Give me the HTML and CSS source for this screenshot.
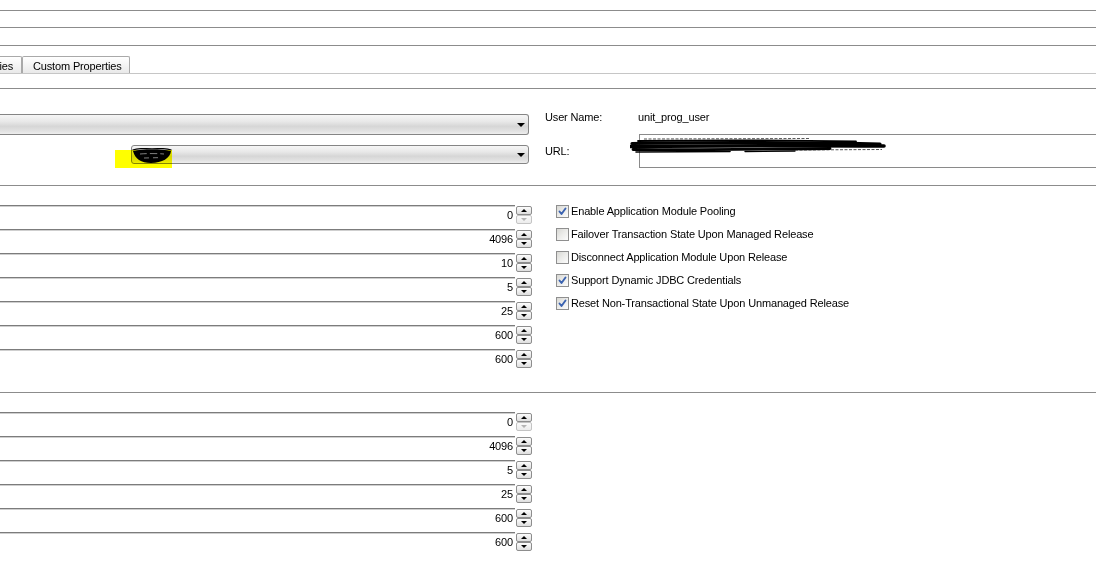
FILE: index.html
```html
<!DOCTYPE html>
<html>
<head>
<meta charset="utf-8">
<title>Configuration</title>
<link rel="stylesheet" href="styles.css">
</head>
<body>
<div class="page">
  <div class="band b1"></div>
  <div class="band b2"></div>
  <div class="band b3"></div>

  <div class="tabsec">
    <div class="tabbar">
      <div class="tab first">ies</div>
      <div class="tab">Custom Properties</div>
    </div>
  </div>

  <section class="conn">
    <div class="conn-left">
      <div class="combo c1"><span class="arrow"></span></div>
      <div class="combo c2">
        <span class="arrow"></span>
        <span class="hilite"></span>
        <svg class="blot" viewBox="0 0 40 16" width="40" height="16">
          <path d="M1 3 C10 0.5 30 0.5 39 3 C38.5 10 30 15 19 15 C9 15 3 11 1 3Z" fill="#000"/>
          <path d="M0.5 2 C10 -0.5 30 -0.5 39.5 2" stroke="#000" stroke-width="1.2" fill="none"/>
          <path d="M8 6 C15 5.4 25 5.4 32 6" stroke="#fff" stroke-width="0.5" fill="none" stroke-dasharray="7 3"/>
          <path d="M12 10 L 29 9.6" stroke="#fff" stroke-width="0.5" stroke-dasharray="5 4" fill="none"/>
        </svg>
      </div>
    </div>
    <div class="conn-right">
      <div class="kv"><span class="lbl">User Name:</span><span class="val">unit_prog_user</span></div>
      <div class="kv url">
        <span class="lbl">URL:</span>
        <div class="urlbox">
          <svg class="urlscrib" viewBox="0 0 256 18" width="256" height="18">
            <g stroke="#555" stroke-width="1" stroke-dasharray="3 1.5" fill="none">
              <path d="M14 2 L 180 1.5"/>
              <path d="M165 13 L 252 12.5"/>
            </g>
            <g fill="none" stroke="#000" stroke-linecap="round">
              <path d="M8 4 C80 3 150 3 226 4.5" stroke-width="1.8"/>
              <path d="M2 6.5 C60 5.5 140 5 250 7" stroke-width="3.2"/>
              <path d="M0 9.5 C70 9 150 8 254 9" stroke-width="3.6"/>
              <path d="M3 12.5 C50 13 110 12.5 200 11.5" stroke-width="2.8"/>
              <path d="M6 15 L 100 14.5" stroke-width="1.6"/>
              <path d="M115 14.5 L 165 14" stroke-width="1.3"/>
            </g>
          </svg>
        </div>
      </div>
    </div>
  </section>

  <section class="pool">
    <div class="spins">
      <div class="spin"><div class="field">0</div><div class="spinner"><span class="btn up"></span><span class="btn down off"></span></div></div>
      <div class="spin"><div class="field">4096</div><div class="spinner"><span class="btn up"></span><span class="btn down"></span></div></div>
      <div class="spin"><div class="field">10</div><div class="spinner"><span class="btn up"></span><span class="btn down"></span></div></div>
      <div class="spin"><div class="field">5</div><div class="spinner"><span class="btn up"></span><span class="btn down"></span></div></div>
      <div class="spin"><div class="field">25</div><div class="spinner"><span class="btn up"></span><span class="btn down"></span></div></div>
      <div class="spin"><div class="field">600</div><div class="spinner"><span class="btn up"></span><span class="btn down"></span></div></div>
      <div class="spin"><div class="field">600</div><div class="spinner"><span class="btn up"></span><span class="btn down"></span></div></div>
    </div>
    <div class="checks">
      <label class="chk-row"><span class="box on"><svg viewBox="0 0 11 11" width="11" height="11"><polyline points="2.5,5.5 4.5,8 8.5,2.5" /></svg></span><span class="txt">Enable Application Module Pooling</span></label>
      <label class="chk-row"><span class="box"></span><span class="txt">Failover Transaction State Upon Managed Release</span></label>
      <label class="chk-row"><span class="box"></span><span class="txt">Disconnect Application Module Upon Release</span></label>
      <label class="chk-row"><span class="box on"><svg viewBox="0 0 11 11" width="11" height="11"><polyline points="2.5,5.5 4.5,8 8.5,2.5" /></svg></span><span class="txt">Support Dynamic JDBC Credentials</span></label>
      <label class="chk-row"><span class="box on"><svg viewBox="0 0 11 11" width="11" height="11"><polyline points="2.5,5.5 4.5,8 8.5,2.5" /></svg></span><span class="txt">Reset Non-Transactional State Upon Unmanaged Release</span></label>
    </div>
  </section>

  <section class="pool2">
    <div class="spins">
      <div class="spin"><div class="field">0</div><div class="spinner"><span class="btn up"></span><span class="btn down off"></span></div></div>
      <div class="spin"><div class="field">4096</div><div class="spinner"><span class="btn up"></span><span class="btn down"></span></div></div>
      <div class="spin"><div class="field">5</div><div class="spinner"><span class="btn up"></span><span class="btn down"></span></div></div>
      <div class="spin"><div class="field">25</div><div class="spinner"><span class="btn up"></span><span class="btn down"></span></div></div>
      <div class="spin"><div class="field">600</div><div class="spinner"><span class="btn up"></span><span class="btn down"></span></div></div>
      <div class="spin"><div class="field">600</div><div class="spinner"><span class="btn up"></span><span class="btn down"></span></div></div>
    </div>
  </section>
</div>
</body>
</html>
```

FILE: styles.css
```css
html, body {
  margin: 0;
  padding: 0;
  background: #ffffff;
}
body {
  font-family: "Liberation Sans", Arial, sans-serif;
  font-size: 11px;
  letter-spacing: -0.15px;
  color: #000;
  overflow: hidden;
  width: 1096px;
  height: 575px;
}
.page {
  width: 1096px;
}

/* top rules */
.band {
  border-bottom: 1px solid #8c8c8c;
}
.b1 { height: 10px; }
.b2 { height: 16px; }
.b3 { height: 17px; }

/* tabs */
.tabsec {
  padding-top: 10px;
  padding-bottom: 14px;
  border-bottom: 1px solid #8c8c8c;
}
.tabbar {
  display: flex;
  height: 17px;
  border-bottom: 1px solid #c6c6c6;
}
.tab {
  box-sizing: border-box;
  height: 17px;
  line-height: 16px;
  padding: 1px 9px 0 10px;
  border: 1px solid #a9a9a9;
  border-bottom: none;
  border-radius: 2px 2px 0 0;
  background: linear-gradient(#ffffff, #e9e9e9);
  color: #000;
  white-space: nowrap;
}
.tab.first {
  width: 22px;
  border-left: none;
  border-radius: 0 2px 0 0;
  overflow: hidden;
  direction: rtl;
  text-align: right;
  padding: 1px 8px 0 0;
}
.tab + .tab {
  width: 108px;
}

/* connection section */
.conn {
  display: flex;
  height: 96px;
  border-bottom: 1px solid #8c8c8c;
}
.conn-left {
  width: 530px;
  padding-top: 25px;
}
.combo {
  position: relative;
  box-sizing: border-box;
  display: flex;
  align-items: center;
  justify-content: flex-end;
  padding-right: 2px;
  border: 1px solid #858585;
  border-radius: 3px;
  background: linear-gradient(#f6f6f6 0%, #e8e8e8 35%, #d6d6d6 60%, #e2e2e2 85%, #eeeeee 100%);
}
.c1 {
  width: 529px;
  height: 21px;
  border-left: none;
  border-radius: 0 3px 3px 0;
}
.c2 {
  width: 398px;
  height: 19px;
  margin-top: 10px;
  margin-left: 131px;
}
.arrow {
  width: 0;
  height: 0;
  border-left: 4px solid transparent;
  border-right: 4px solid transparent;
  border-top: 4px solid #000;
  margin-right: 1px;
}
.hilite {
  position: absolute;
  left: -17px;
  top: 4px;
  width: 57px;
  height: 18px;
  background: #ffff00;
  mix-blend-mode: multiply;
}
.blot {
  position: absolute;
  left: 0;
  top: 2px;
}

.conn-right {
  flex: 1;
  margin-left: 15px;
  padding-top: 20px;
}
.kv {
  display: flex;
  align-items: center;
}
.kv .lbl {
  width: 93px;
  line-height: 16px;
}
.kv:first-child {
  height: 16px;
}
.kv.url {
  margin-top: 9px;
}
.urlbox {
  position: relative;
  flex: 1;
  height: 34px;
  box-sizing: border-box;
  margin-left: 1px;
  border: 1px solid #8a8a8a;
  border-right: none;
}
.urlscrib {
  position: absolute;
  left: -10px;
  top: 2px;
}

/* spinner groups */
.pool {
  display: flex;
  height: 206px;
  border-bottom: 1px solid #8c8c8c;
}
.pool2 {
  display: flex;
}
.spins {
  width: 533px;
  padding-top: 19px;
  display: flex;
  flex-direction: column;
  gap: 4px;
}
.spin {
  display: flex;
  height: 20px;
}
.field {
  box-sizing: border-box;
  width: 515px;
  height: 20px;
  border-top: 1px solid #7c7c7c;
  box-shadow: inset 0 1px 0 #cfcfcf;
  text-align: right;
  padding-right: 2px;
  line-height: 19px;
}
.spinner {
  margin-left: 1px;
  margin-top: 1px;
  width: 16px;
  display: flex;
  flex-direction: column;
}
.btn {
  box-sizing: border-box;
  height: 9px;
  border: 1px solid #8d8d8d;
  border-radius: 2px;
  background: linear-gradient(#fdfdfd, #dedede);
  display: flex;
  align-items: center;
  justify-content: center;
}
.btn::after {
  content: "";
  width: 0;
  height: 0;
  border-left: 3px solid transparent;
  border-right: 3px solid transparent;
}
.btn.up::after {
  border-bottom: 3px solid #000;
}
.btn.down::after {
  border-top: 3px solid #000;
}
.btn.off {
  border-color: #c4c4c4;
  background: linear-gradient(#fafafa, #ececec);
}
.btn.down.off::after {
  border-top-color: #b4b4b4;
}

/* checkboxes */
.checks {
  margin-left: 23px;
  padding-top: 19px;
  display: flex;
  flex-direction: column;
  gap: 10px;
}
.chk-row {
  display: flex;
  align-items: center;
  height: 13px;
}
.box {
  box-sizing: border-box;
  width: 13px;
  height: 13px;
  border: 1px solid #8f8f8f;
  background: linear-gradient(135deg, #d8d8d4 0%, #ececea 50%, #fcfcfc 100%);
  display: flex;
  align-items: center;
  justify-content: center;
}
.box svg polyline {
  fill: none;
  stroke: #3a62b0;
  stroke-width: 1.9;
  stroke-linecap: round;
  stroke-linejoin: round;
}
.txt {
  margin-left: 2px;
  line-height: 13px;
  white-space: nowrap;
}
.val {
  white-space: nowrap;
}
```
